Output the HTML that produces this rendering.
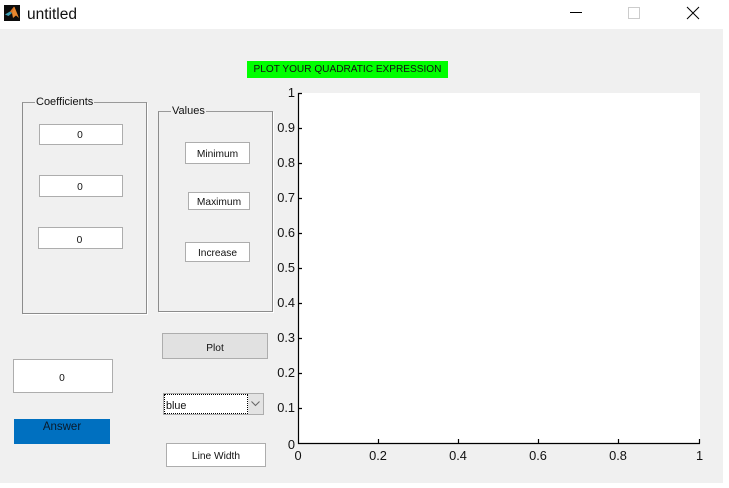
<!DOCTYPE html>
<html>
<head>
<meta charset="utf-8">
<style>
html,body{margin:0;padding:0;background:#fff;}
#r{position:relative;width:729px;height:488px;overflow:hidden;background:#fff;font-family:"Liberation Sans",sans-serif;color:#000;}
#r div{position:absolute;box-sizing:border-box;}
.e{background:#fff;border:1px solid #adadad;text-align:center;font-size:10.2px;white-space:nowrap;color:#111;}
.p{border:1px solid #8c8c8c;border-top-color:#999;border-left-color:#8c8c8c;box-shadow:1px 1px 0 #fff;}
.l{font-size:11px;background:#f0f0f0;line-height:12px;padding:0 1px;white-space:nowrap;color:#111;}
</style>
</head>
<body>
<div id="r">
<div style="left:0;top:29px;width:723px;height:454px;background:#f0f0f0;"></div>

<svg style="position:absolute;left:4px;top:5px;" width="16" height="16" viewBox="0 0 16 16">
<rect width="16" height="16" fill="#0c0c0c"/>
<path d="M1 9.500 L6 6.500 L8 8 L4.500 11 Z" fill="#3f9fb5"/>
<path d="M6 6.500 L10 1.500 L11 3 L8 8 Z" fill="#d9752a"/>
<path d="M8 8 L10.500 2 L15 13 L12 10.500 L9 13 Z" fill="#e8872e"/>
</svg>
<div style="left:27px;top:7px;font-size:15.5px;line-height:16px;color:#111;">untitled</div>

<div style="left:570px;top:12px;width:12px;height:1px;background:#000;"></div>
<div style="left:628px;top:7px;width:12px;height:12px;border:1px solid #ccc;"></div>
<svg style="position:absolute;left:686px;top:6px;" width="14" height="14" viewBox="0 0 14 14"><path d="M1 1 L13 13 M13 1 L1 13" stroke="#000" stroke-width="1" fill="none"/></svg>

<div style="left:247px;top:61px;width:201px;height:17px;background:#00ff00;font-size:10.100px;line-height:17px;text-align:center;white-space:nowrap;color:#111;">PLOT YOUR QUADRATIC EXPRESSION</div>

<div class="p" style="left:22px;top:102px;width:125px;height:212px;"></div>
<div class="l" style="left:35px;top:96px;">Coefficients</div>
<div class="e" style="left:39px;top:124px;width:84px;height:21px;line-height:22px;text-indent:-2px;">0</div>
<div class="e" style="left:39px;top:175px;width:84px;height:22px;line-height:23px;text-indent:-2px;">0</div>
<div class="e" style="left:38px;top:227px;width:85px;height:22px;line-height:25px;text-indent:-2px;">0</div>

<div class="p" style="left:158px;top:111px;width:115px;height:201px;"></div>
<div class="l" style="left:171px;top:105px;">Values</div>
<div class="e" style="left:185px;top:142px;width:65px;height:22px;line-height:23px;">Minimum</div>
<div class="e" style="left:188px;top:192px;width:62px;height:18px;line-height:19px;">Maximum</div>
<div class="e" style="left:185px;top:242px;width:65px;height:20px;line-height:21px;">Increase</div>

<div class="e" style="left:162px;top:333px;width:106px;height:26px;line-height:29px;background:#e1e1e1;">Plot</div>
<div class="e" style="left:13px;top:359px;width:100px;height:34px;line-height:37px;text-indent:-2px;">0</div>
<div style="left:14px;top:419px;width:96px;height:25px;background:#0070c0;font-size:11.500px;line-height:16px;text-align:center;color:#0a1a2a;">Answer</div>

<div style="left:163px;top:393px;width:101px;height:22px;background:#e3e3e3;border:1px solid #adadad;"></div>
<div style="left:164px;top:394px;width:84px;height:20px;background:#fff;border:1px dotted #000;font-size:10.800px;line-height:22px;padding-left:1px;color:#111;">blue</div>
<svg style="position:absolute;left:250px;top:400px;" width="12" height="8" viewBox="0 0 12 8"><path d="M1.500 1.500 L5.500 5.500 L9.500 1.500" stroke="#666" fill="none"/></svg>

<div class="e" style="left:166px;top:443px;width:100px;height:24px;line-height:25px;">Line Width</div>

<svg style="position:absolute;left:0;top:0;" width="729" height="488" font-family="Liberation Sans, sans-serif" font-size="12.800" fill="#111">
<rect x="298" y="93" width="402" height="350" fill="#fff"/>
<path d="M298.500 93 V443.500 H700 M298 93.500 H302 M298 128.500 H302 M298 163.500 H302 M298 198.500 H302 M298 233.500 H302 M298 268.500 H302 M298 303.500 H302 M298 338.500 H302 M298 373.500 H302 M298 408.500 H302 M378.500 443 V439 M458.500 443 V439 M538.500 443 V439 M618.500 443 V439 M699.500 443.500 V439" stroke="#000" stroke-width="1.200" fill="none"/>
<g text-anchor="end">
<text x="295" y="97">1</text>
<text x="295" y="132">0.9</text>
<text x="295" y="167">0.8</text>
<text x="295" y="202">0.7</text>
<text x="295" y="237">0.6</text>
<text x="295" y="272">0.5</text>
<text x="295" y="307">0.4</text>
<text x="295" y="342">0.3</text>
<text x="295" y="377">0.2</text>
<text x="295" y="412">0.1</text>
<text x="295" y="449">0</text>
</g>
<g text-anchor="middle">
<text x="298" y="460">0</text>
<text x="378" y="460">0.2</text>
<text x="458" y="460">0.4</text>
<text x="538" y="460">0.6</text>
<text x="618" y="460">0.8</text>
<text x="699.500" y="460">1</text>
</g>
</svg>
</div>
</body>
</html>
